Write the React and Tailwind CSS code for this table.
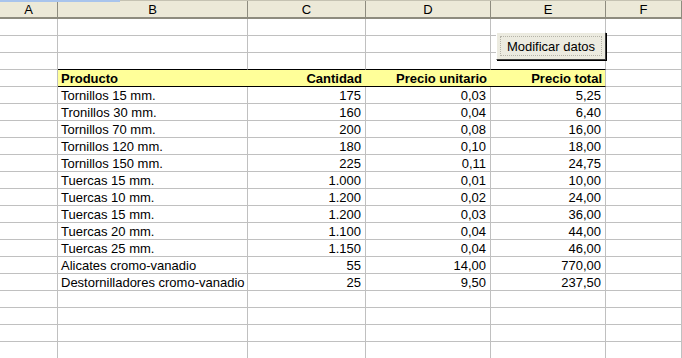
import React from "react";

// Anchos de columna de la hoja (A..F)
const COLS = ["w-[58px]", "w-[190px]", "w-[118px]", "w-[125px]", "w-[115px]", "flex-1"];
const LETTERS = ["A", "B", "C", "D", "E", "F"];

const productos = [
  ["Tornillos 15 mm.", "175", "0,03", "5,25"],
  ["Tronillos 30 mm.", "160", "0,04", "6,40"],
  ["Tornillos 70 mm.", "200", "0,08", "16,00"],
  ["Tornillos 120 mm.", "180", "0,10", "18,00"],
  ["Tornillos 150 mm.", "225", "0,11", "24,75"],
  ["Tuercas 15 mm.", "1.000", "0,01", "10,00"],
  ["Tuercas 10 mm.", "1.200", "0,02", "24,00"],
  ["Tuercas 15 mm.", "1.200", "0,03", "36,00"],
  ["Tuercas 20 mm.", "1.100", "0,04", "44,00"],
  ["Tuercas 25 mm.", "1.150", "0,04", "46,00"],
  ["Alicates cromo-vanadio", "55", "14,00", "770,00"],
  ["Destornilladores cromo-vanadio", "25", "9,50", "237,50"],
];

function Cell({ col, children, right, bottom = "border-b-[#c0c0c0]" }) {
  return (
    <div
      className={`${COLS[col]} shrink-0 h-full border-r border-b border-r-[#c0c0c0] ${bottom} flex items-center overflow-hidden whitespace-nowrap ${
        right ? "justify-end pr-[4px]" : "pl-[3px]"
      }`}
    >
      {children}
    </div>
  );
}

function EmptyRow({ blackUnder }) {
  return (
    <div className="flex h-[17px]">
      {COLS.map((_, i) => (
        <Cell
          key={i}
          col={i}
          bottom={blackUnder && i >= 1 && i <= 4 ? "border-b-black" : "border-b-[#c0c0c0]"}
        />
      ))}
    </div>
  );
}

export default function App() {
  return (
    <div
      className="relative w-[682px] h-[358px] overflow-hidden bg-white text-black text-[13px] leading-none"
      style={{ fontFamily: '"Liberation Sans", Arial, sans-serif' }}
    >
      {/* Cabecera de columnas */}
      <div className="relative flex h-[19px] bg-[#ece9d8] border-t border-[#c5c2b2] border-b-2 border-b-[#8e8c7f]">
        <div className="absolute left-0 top-[-1px] w-[120px] h-[2px] bg-[#a9c4ec]" />
        {LETTERS.map((l, i) => (
          <div
            key={l}
            className={`${COLS[i]} shrink-0 h-full flex items-center justify-center border-r border-[#8e8c7f] text-[13px]`}
          >
            {l}
          </div>
        ))}
      </div>

      <EmptyRow />
      <EmptyRow />
      <EmptyRow blackUnder />

      {/* Fila de títulos */}
      <div className="flex h-[17px] font-bold">
        <Cell col={0} />
        <div className="w-[548px] shrink-0 h-full flex bg-[#ffff99] border-b border-black border-r border-r-[#c0c0c0]">
          <div className="w-[190px] flex items-center pl-[3px]">Producto</div>
          <div className="w-[118px] flex items-center justify-end pr-[4px]">Cantidad</div>
          <div className="w-[125px] flex items-center justify-end pr-[4px]">Precio unitario</div>
          <div className="flex-1 flex items-center justify-end pr-[3px]">Precio total</div>
        </div>
        <Cell col={5} />
      </div>

      {productos.map(([nombre, cant, precio, total], idx) => (
        <div key={idx} className="flex h-[17px]">
          <Cell col={0} />
          <Cell col={1}>{nombre}</Cell>
          <Cell col={2} right>{cant}</Cell>
          <Cell col={3} right>{precio}</Cell>
          <Cell col={4} right>{total}</Cell>
          <Cell col={5} />
        </div>
      ))}

      <EmptyRow />
      <EmptyRow />
      <EmptyRow />
      <EmptyRow />

      {/* Botón de formulario sobre la hoja */}
      <button
        type="button"
        className="absolute left-[496px] top-[32px] w-[110px] h-[28px] bg-[#ecebe0] border border-t-white border-l-white border-r-[#404040] border-b-[#404040] shadow-[1px_1px_0_#000] p-[3px]"
      >
        <span className="flex w-full h-full items-center justify-center border border-dotted border-[#b5b3a8] text-[13px]">
          Modificar datos
        </span>
      </button>
    </div>
  );
}
